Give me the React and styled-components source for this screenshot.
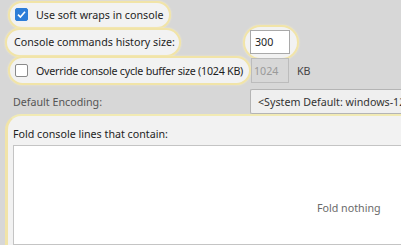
import React from 'react';
import styled, { createGlobalStyle } from 'styled-components';

const GlobalStyle = createGlobalStyle`
  html, body {
    margin: 0;
    padding: 0;
    background: #d7d7d7;
  }
  body {
    font-family: "Noto Sans", "Open Sans", sans-serif;
    font-size: 10.7px;
    color: #1e1e1e;
  }
`;

const Page = styled.div`
  width: 401px;
  height: 245px;
  overflow: hidden;
  display: flex;
  flex-direction: column;
`;

const Row = styled.div`
  display: flex;
  align-items: center;
  height: ${p => p.$h}px;
  margin-top: ${p => p.$mt || 0}px;
`;

const Pill = styled.div`
  box-sizing: border-box;
  display: flex;
  align-items: center;
  gap: 8px;
  width: ${p => p.$w}px;
  height: ${p => p.$h}px;
  margin-left: ${p => p.$ml || 0}px;
  padding-left: ${p => p.$pl || 5}px;
  background: #f2f2f2;
  border: 2px solid #f1e4a8;
  border-radius: ${p => p.$h / 2}px;
  box-shadow: 0 0 2px #f6edc8;
  white-space: nowrap;
  letter-spacing: ${p => p.$ls || 0}px;
  flex-shrink: 0;
`;

const Check = styled.span`
  box-sizing: border-box;
  flex-shrink: 0;
  width: 13px;
  height: 13px;
  border-radius: 2px;
  display: inline-flex;
  align-items: center;
  justify-content: center;
  background: ${p => (p.$on ? '#2d7dd8' : '#ffffff')};
  border: 1px solid ${p => (p.$on ? '#2d7dd8' : '#8a8a8a')};
`;

const Field = styled.div`
  box-sizing: border-box;
  width: ${p => p.$w}px;
  height: ${p => p.$h}px;
  margin-left: ${p => p.$ml || 0}px;
  padding-left: ${p => p.$pl || 3}px;
  display: flex;
  align-items: center;
  background: ${p => (p.$disabled ? '#d7d7d7' : '#ffffff')};
  border: 1px solid ${p => (p.$disabled ? '#bcbcbc' : '#a9a9a9')};
  color: ${p => (p.$disabled ? '#9a9a9a' : '#1e1e1e')};
  white-space: nowrap;
  overflow: hidden;
  flex-shrink: 0;
`;

const Unit = styled.span`
  margin-left: 8px;
  color: #444;
`;

const Muted = styled.span`
  margin-left: 13px;
  color: #555;
  width: 237px;
  flex-shrink: 0;
`;

const Combo = styled(Field)`
  background: #efefef;
  border-color: #b4b4b4;
  border-radius: 2px 0 0 2px;
  color: #333;
  padding-left: 7px;
  width: 151px;
  border-right: none;
`;

const FoldPanel = styled.div`
  box-sizing: border-box;
  margin-left: 5px;
  width: 420px;
  flex: 1;
  background: #f2f2f2;
  border-left: 3px solid #f1e4a8;
  border-top: 2px solid #f1eab4;
  border-top-left-radius: 16px;
  display: flex;
  flex-direction: column;
  padding: 11px 0 0 5px;
`;

const FoldLabel = styled.div`
  height: 17px;
  margin-bottom: 1px;
`;

const ListBox = styled.div`
  flex: 1;
  background: #ffffff;
  border: 1px solid #c4c4c4;
  display: flex;
  align-items: center;
  padding-left: 303px;
  padding-top: 26px;
  color: #6a6a6a;
`;

const Tick = () => (
  <svg width="11" height="11" viewBox="0 0 11 11">
    <path d="M2 5.6 L4.4 8 L9 2.8" fill="none" stroke="#fff" strokeWidth="1.6" />
  </svg>
);

export default function App() {
  return (
    <Page>
      <GlobalStyle />
      <Row $h={29}>
        <Pill $w={163} $h={28} $ml={8}>
          <Check $on><Tick /></Check>
          Use soft wraps in console
        </Pill>
      </Row>
      <Row $h={34} $mt={-4}>
        <Pill $w={176} $h={29} $ml={5} $pl={7}>
          Console commands history size:
        </Pill>
        <Pill $w={56} $h={35} $ml={62} $pl={5}>
          <Field $w={40} $h={24} $pl={4}>300</Field>
        </Pill>
      </Row>
      <Row $h={29} $mt={-3}>
        <Pill $w={243} $h={29} $ml={8} $ls={-0.25}>
          <Check />
          Override console cycle buffer size (1024 KB)
        </Pill>
        <Field $w={38} $h={25} $disabled $pl={2}>1024</Field>
        <Unit>KB</Unit>
      </Row>
      <Row $h={25} $mt={4}>
        <Muted>Default Encoding:</Muted>
        <Combo $h={25}>&lt;System Default: windows-12</Combo>
      </Row>
      <FoldPanel>
        <FoldLabel>Fold console lines that contain:</FoldLabel>
        <ListBox>Fold nothing</ListBox>
      </FoldPanel>
    </Page>
  );
}
